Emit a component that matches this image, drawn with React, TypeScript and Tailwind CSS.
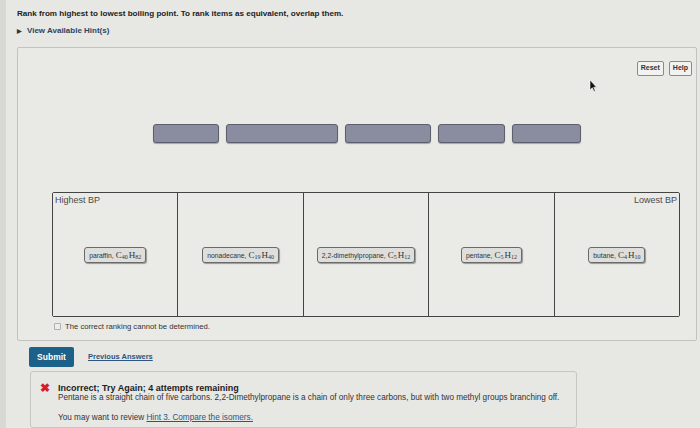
import React from "react";

const Formula = ({ c, h }: { c: string; h: string }) => (
  <span className="ml-[2px]" style={{ fontFamily: '"Liberation Serif", serif' }}>
    <span className="text-[9px]">C</span>
    <span className="text-[6px] align-[-1px]">{c}</span>
    <span className="text-[9px] ml-[1px]">H</span>
    <span className="text-[6px] align-[-1px]">{h}</span>
  </span>
);

const Item = ({ name, c, h }: { name: string; c: string; h: string }) => (
  <div className="flex items-center h-[16px] px-[4px] bg-[#dededc] border border-[#6a6a6a] rounded-[3px] shadow-[1px_1px_1px_rgba(0,0,0,0.35)] text-[#333] whitespace-nowrap">
    <span className="leading-[10px] mt-[1px]">
      <span className="text-[6.8px]">{name},</span>
      <Formula c={c} h={h} />
    </span>
  </div>
);

const Col = ({ children, label, right, last }: { children: React.ReactNode; label?: string; right?: boolean; last?: boolean }) => (
  <div className={`relative flex-1 flex items-center justify-center bg-[#eaeae7] ${last ? "" : "border-r border-[#444]"}`}>
    {label && (
      <span className={`absolute top-[1px] text-[9px] text-[#4a4a4a] ${right ? "right-[2px]" : "left-[2px]"}`}>{label}</span>
    )}
    {children}
  </div>
);

export default function App() {
  return (
    <div className="w-[700px] h-[428px] bg-[#e7e7e4] overflow-hidden flex" style={{ fontFamily: '"Liberation Sans", Arial, sans-serif' }}>
      <div className="w-[6px] bg-[#d8d8d5] shrink-0" />
      <div className="flex-1 flex flex-col pl-[11px]">
        <div className="pt-[9px] text-[8.1px] font-bold text-[#222] leading-[10px]">
          Rank from highest to lowest boiling point. To rank items as equivalent, overlap them.
        </div>
        <div className="mt-[7px] flex items-center gap-[5px] text-[8px] font-bold text-[#2c4565] leading-[10px]">
          <span className="text-[6px] text-[#333]">▶</span>
          <span>View Available Hint(s)</span>
        </div>
        <div className="relative mt-[11px] mr-[3px] h-[294px] border border-[#c2c2bf] rounded-[2px] bg-[#e9e9e6] flex flex-col">
          <div className="flex justify-end gap-[5px] pt-[13px] pr-[4px]">
            <div className="h-[15px] px-[3px] flex items-center bg-[#f2f2f0] border border-[#8a8a8a] rounded-[2px] text-[7px] font-bold text-[#333]">Reset</div>
            <div className="h-[15px] px-[3px] flex items-center bg-[#f2f2f0] border border-[#8a8a8a] rounded-[2px] text-[7px] font-bold text-[#333]">Help</div>
          </div>
          <svg className="absolute left-[571px] top-[32px]" width="8" height="12" viewBox="0 0 8 12">
            <path d="M1 0 L1 10 L3.3 7.8 L5 11.5 L6.3 11 L4.7 7.3 L7.5 7.2 Z" fill="#111" stroke="#fff" strokeWidth="0.6" />
          </svg>
          <div className="flex gap-[7px] pl-[135px] mt-[48px]">
            {[66, 112, 86, 67, 69].map((w, i) => (
              <div key={i} style={{ width: w }} className="h-[19px] bg-[#8a8c9f] border border-[#5d5f6e] rounded-[3px] shadow-[0_1px_1px_rgba(0,0,0,0.3)]" />
            ))}
          </div>
          <div className="ml-[34px] mt-[49px] w-[628px] h-[125px] border border-[#444] rounded-[2px] flex overflow-hidden">
            <Col label="Highest BP">
              <Item name="paraffin" c="40" h="82" />
            </Col>
            <Col>
              <Item name="nonadecane" c="19" h="40" />
            </Col>
            <Col>
              <Item name="2,2-dimethylpropane" c="5" h="12" />
            </Col>
            <Col>
              <Item name="pentane" c="5" h="12" />
            </Col>
            <Col label="Lowest BP" right last>
              <Item name="butane" c="4" h="10" />
            </Col>
          </div>
          <div className="ml-[36px] mt-[4px] flex items-center gap-[4px]">
            <div className="w-[7px] h-[7px] border border-[#b0b0b0] bg-[#ededeb] rounded-[1px]" />
            <span className="text-[7.7px] text-[#333]">The correct ranking cannot be determined.</span>
          </div>
        </div>
        <div className="mt-[6px] ml-[12px] flex items-center gap-[14px]">
          <div className="w-[45px] h-[20px] bg-[#1b6189] rounded-[2px] flex items-center justify-center text-white text-[8.5px] font-bold">Submit</div>
          <span className="text-[7.5px] font-bold text-[#2d5581] underline">Previous Answers</span>
        </div>
        <div className="mt-[4px] ml-[13px] w-[547px] flex-1 border border-[#c6c6c3] rounded-[3px] bg-[#e7e7e4] pl-[9px] pt-[11px]">
          <div className="flex items-start gap-[8px]">
            <span className="text-[#d0202a] text-[12px] font-bold leading-[11px]">✖</span>
            <div className="flex flex-col">
              <span className="text-[9px] font-bold text-[#222] leading-[10px]">Incorrect; Try Again; 4 attempts remaining</span>
              <span className="text-[8.2px] text-[#333] leading-[9px]">
                Pentane is a straight chain of five carbons. 2,2-Dimethylpropane is a chain of only three carbons, but with two methyl groups branching off.
              </span>
              <span className="text-[8.2px] text-[#333] leading-[9px] mt-[11px]">
                You may want to review <span className="text-[#2d5581] underline">Hint 3. Compare the isomers.</span>
              </span>
            </div>
          </div>
        </div>
      </div>
    </div>
  );
}
